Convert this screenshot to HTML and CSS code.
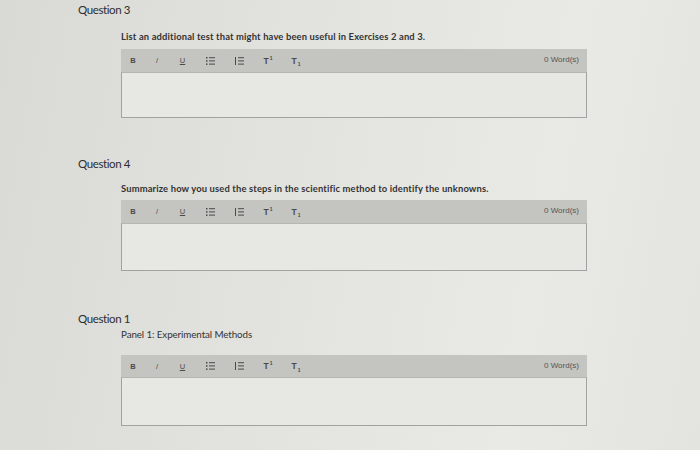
FILE: index.html
```html
<!DOCTYPE html>
<html>
  <head>
    <meta charset="utf-8">
    <title>Quiz</title>
    <link rel="stylesheet" href="styles.css">
  </head>
  <body>
    <div class="page">
      <!-- Question 3 -->
      <div class="question q3">
        <div class="q-title">Question 3</div>
        <div class="q-body">
          <p class="prompt">List an additional test that might have been useful in Exercises 2 and 3.</p>
          <div class="editor">
            <div class="toolbar">
              <span class="tool bold">B</span>
              <span class="tool ital">/</span>
              <span class="tool under">U</span>
              <span class="tool list">
                <svg width="9" height="8" viewBox="0 0 9 8"><g fill="#4a4a4a"><rect x="0" y="0" width="1.5" height="1.5"/><rect x="0" y="3.2" width="1.5" height="1.5"/><rect x="0" y="6.4" width="1.5" height="1.5"/><rect x="3" y="0.2" width="6" height="1"/><rect x="3" y="3.4" width="6" height="1"/><rect x="3" y="6.6" width="6" height="1"/></g></svg>
              </span>
              <span class="tool list">
                <svg width="9" height="8" viewBox="0 0 9 8"><g fill="#4a4a4a"><rect x="0" y="0" width="1" height="8"/><rect x="3" y="0.2" width="6" height="1"/><rect x="3" y="3.4" width="6" height="1"/><rect x="3" y="6.6" width="6" height="1"/></g></svg>
              </span>
              <span class="tool script"><span>T<sup>1</sup></span></span>
              <span class="tool script"><span>T<sub>1</sub></span></span>
              <span class="count">0 Word(s)</span>
            </div>
            <div class="text-area short"></div>
          </div>
        </div>
      </div>

      <!-- Question 4 -->
      <div class="question q4">
        <div class="q-title">Question 4</div>
        <div class="q-body">
          <p class="prompt">Summarize how you used the steps in the scientific method to identify the unknowns.</p>
          <div class="editor">
            <div class="toolbar">
              <span class="tool bold">B</span>
              <span class="tool ital">/</span>
              <span class="tool under">U</span>
              <span class="tool list">
                <svg width="9" height="8" viewBox="0 0 9 8"><g fill="#4a4a4a"><rect x="0" y="0" width="1.5" height="1.5"/><rect x="0" y="3.2" width="1.5" height="1.5"/><rect x="0" y="6.4" width="1.5" height="1.5"/><rect x="3" y="0.2" width="6" height="1"/><rect x="3" y="3.4" width="6" height="1"/><rect x="3" y="6.6" width="6" height="1"/></g></svg>
              </span>
              <span class="tool list">
                <svg width="9" height="8" viewBox="0 0 9 8"><g fill="#4a4a4a"><rect x="0" y="0" width="1" height="8"/><rect x="3" y="0.2" width="6" height="1"/><rect x="3" y="3.4" width="6" height="1"/><rect x="3" y="6.6" width="6" height="1"/></g></svg>
              </span>
              <span class="tool script"><span>T<sup>1</sup></span></span>
              <span class="tool script"><span>T<sub>1</sub></span></span>
              <span class="count">0 Word(s)</span>
            </div>
            <div class="text-area"></div>
          </div>
        </div>
      </div>

      <!-- Question 1 -->
      <div class="question q1">
        <div class="q-title">Question 1</div>
        <div class="q-body">
          <p class="prompt plain">Panel 1: Experimental Methods</p>
          <div class="editor">
            <div class="toolbar">
              <span class="tool bold">B</span>
              <span class="tool ital">/</span>
              <span class="tool under">U</span>
              <span class="tool list">
                <svg width="9" height="8" viewBox="0 0 9 8"><g fill="#4a4a4a"><rect x="0" y="0" width="1.5" height="1.5"/><rect x="0" y="3.2" width="1.5" height="1.5"/><rect x="0" y="6.4" width="1.5" height="1.5"/><rect x="3" y="0.2" width="6" height="1"/><rect x="3" y="3.4" width="6" height="1"/><rect x="3" y="6.6" width="6" height="1"/></g></svg>
              </span>
              <span class="tool list">
                <svg width="9" height="8" viewBox="0 0 9 8"><g fill="#4a4a4a"><rect x="0" y="0" width="1" height="8"/><rect x="3" y="0.2" width="6" height="1"/><rect x="3" y="3.4" width="6" height="1"/><rect x="3" y="6.6" width="6" height="1"/></g></svg>
              </span>
              <span class="tool script"><span>T<sup>1</sup></span></span>
              <span class="tool script"><span>T<sub>1</sub></span></span>
              <span class="count">0 Word(s)</span>
            </div>
            <div class="text-area tall"></div>
          </div>
        </div>
      </div>
    </div>
  </body>
</html>
```

FILE: styles.css
```css
body, html {
  margin: 0;
  padding: 0;
  height: 100%;
  width: 100%;
  overflow: hidden;
  background: linear-gradient(100deg, #d9d9d5 0%, #e2e2de 40%, #e9e9e6 75%, #e3e3df 100%);
  font-family: Lato, "Open Sans", sans-serif;
  color: #2b2b2b;
}

.page {
  padding: 3px 0 0 78px;
}

.q-title {
  font-size: 11.5px;
  line-height: 14px;
  letter-spacing: -0.4px;
  color: #2e2e2e;
}

.q-body {
  margin-left: 43px;
  width: 466px;
}

.prompt {
  margin: 0;
  font-size: 9.4px;
  line-height: 12px;
  font-weight: bold;
  color: #333;
  letter-spacing: 0.15px;
}

.prompt.plain {
  font-weight: normal;
  font-size: 9.8px;
  letter-spacing: -0.1px;
}

/* spacing between the blocks */
.q3 .prompt { margin-top: 14px; }
.q3 .editor { margin-top: 6px; }

.q4 { margin-top: 39px; }
.q4 .prompt { margin-top: 12px; }
.q4 .editor { margin-top: 5px; }

.q1 { margin-top: 41px; }
.q1 .prompt { margin-top: 2px; }
.q1 .editor { margin-top: 15px; }

/* Editor */
.toolbar {
  height: 23px;
  background-color: #c4c4c1;
  display: flex;
  align-items: center;
  font-family: "Liberation Sans", Arial, sans-serif;
  color: #4a4a4a;
}

.q1 .toolbar { height: 22px; }

.tool {
  display: flex;
  justify-content: center;
  align-items: center;
  width: 28px;
  font-size: 7.5px;
}

.tool.bold { width: 24px; font-weight: bold; }
.tool.ital { width: 24px; }
.tool.under { width: 27px; text-decoration: underline; }
.tool.list { width: 29px; }
.tool.script { font-weight: bold; font-size: 8.5px; line-height: 10px; }

.tool sup, .tool sub {
  font-size: 5px;
  margin-left: 1px;
  line-height: 0;
}

.count {
  margin-left: auto;
  padding-right: 8px;
  font-size: 8px;
  color: #555;
  margin-top: -2px;
}

.text-area {
  height: 48px;
  box-sizing: border-box;
  background-color: #e7e7e4;
  border: 1px solid #a2a2a0;
  border-top: 1px solid #b5b5b2;
}

.text-area.short { height: 46px; }
.text-area.tall { height: 49px; }
```
